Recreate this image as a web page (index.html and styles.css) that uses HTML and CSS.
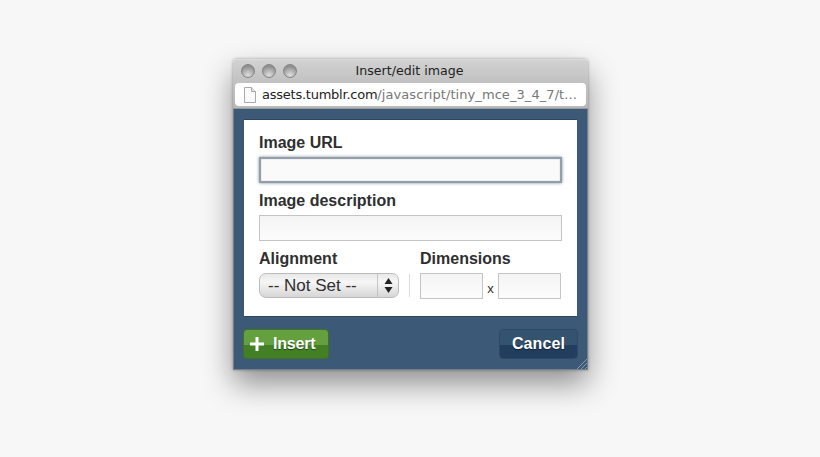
FILE: index.html
```html
<!DOCTYPE html>
<html>
<head>
  <meta charset="utf-8">
  <link rel="stylesheet" href="styles.css">
</head>
<body>
  <div class="window">
    <div class="titlebar">
      <div class="lights">
        <span class="light"></span>
        <span class="light"></span>
        <span class="light"></span>
      </div>
      <div class="title">Insert/edit image</div>
    </div>
    <div class="addressbar">
      <div class="address">
        <svg class="page-icon" width="13" height="16" viewBox="0 0 13 16">
          <path d="M1.5 .5H8.5L12.5 4.5V15.5H1.5Z" fill="#fbfbfb" stroke="#a9a9a9"/>
          <path d="M8.5 .5V4.5H12.5" fill="#e4e4e4" stroke="#a9a9a9"/>
        </svg>
        <span class="host">assets.tumblr.com</span><span class="path">/javascript/tiny_mce_3_4_7/t...</span>
      </div>
    </div>
    <div class="content">
      <div class="panel">
        <label class="field-label">Image URL</label>
        <div class="input input-focus"></div>
        <label class="field-label">Image description</label>
        <div class="input"></div>
        <div class="columns">
          <div class="col-align">
            <label class="field-label">Alignment</label>
            <div class="select">
              <span class="select-value">-- Not Set --</span>
              <span class="select-arrows">
                <svg width="9" height="17" viewBox="0 0 9 17">
                  <path d="M4.5 1L8.5 7H.5Z" fill="#222"/>
                  <path d="M4.5 16L.5 10H8.5Z" fill="#222"/>
                </svg>
              </span>
            </div>
          </div>
          <div class="divider"></div>
          <div class="col-dims">
            <label class="field-label">Dimensions</label>
            <div class="dims">
              <div class="input input-dim"></div>
              <span class="times">x</span>
              <div class="input input-dim"></div>
            </div>
          </div>
        </div>
      </div>
      <div class="actions">
        <div class="btn btn-insert">
          <svg width="16" height="16" viewBox="0 0 16 16">
            <path d="M8 1V15M1 8H15" stroke="#fff" stroke-width="3"/>
          </svg>
          <span>Insert</span>
        </div>
        <div class="btn btn-cancel">Cancel</div>
      </div>
      <svg class="grip" width="12" height="12" viewBox="0 0 12 12">
        <path d="M2 12L12 2M6 12L12 6M10 12L12 10" stroke="#8799aa" stroke-width="1"/>
      </svg>
    </div>
  </div>
</body>
</html>
```

FILE: styles.css
```css
body {
  margin: 0;
  padding: 59px 0 0 233px;
  height: 398px;
  overflow: hidden;
  background: #f7f7f7;
  font-family: "Liberation Sans", Arial, sans-serif;
  color: #2f2f2f;
}

.window {
  width: 355px;
  border-radius: 4px 4px 0 0;
  box-shadow: 0 14px 30px rgba(0, 0, 0, 0.42), 0 0 3px rgba(0, 0, 0, 0.35);
}

.titlebar {
  display: flex;
  align-items: center;
  height: 21px;
  padding: 0 8px;
  border-radius: 4px 4px 0 0;
  background: linear-gradient(#d2d2d2, #c2c2c2);
  border-top: 1px solid #dcdcdc;
}

.lights {
  display: flex;
  gap: 7px;
}

.light {
  width: 14px;
  height: 14px;
  border-radius: 50%;
  border: 1px solid #858585;
  background: radial-gradient(circle at 50% 85%, #dfdfdf, #8f8f8f 75%);
  box-sizing: border-box;
}

.title {
  flex: 1;
  padding-right: 58px;
  text-align: center;
  font-family: "DejaVu Sans", sans-serif;
  font-size: 12.6px;
  color: #222;
}

.addressbar {
  height: 28px;
  padding: 2px 2px 0;
  background: linear-gradient(#c2c2c2, #b8b8b8);
  border-bottom: 1px solid #9a9a9a;
  box-sizing: border-box;
}

.address {
  display: flex;
  align-items: center;
  height: 23px;
  padding-left: 8px;
  background: #fff;
  border-radius: 4px;
  font-family: "DejaVu Sans", sans-serif;
  font-size: 13px;
  white-space: nowrap;
  overflow: hidden;
}

.page-icon {
  margin-right: 6px;
  flex-shrink: 0;
}

.host {
  color: #222;
  letter-spacing: -0.24px;
}

.path {
  color: #777;
  letter-spacing: 0.07px;
}

.content {
  position: relative;
  height: 261px;
  padding: 11px 10px 0;
  box-sizing: border-box;
  background: #3c5a78;
  border: 1px solid #71808f;
  border-width: 0 1px 1px;
}

.panel {
  height: 197px;
  padding: 13px 15px 0;
  box-sizing: border-box;
  background: #fff;
  border-bottom: 1px solid #2e475f;
  box-shadow: 0 -1px 0 #2e475f;
}

.field-label {
  display: block;
  font-size: 16px;
  font-weight: bold;
  line-height: 19px;
  margin-bottom: 5px;
}

.input {
  height: 26px;
  box-sizing: border-box;
  border: 1px solid #c4c4c4;
  background: linear-gradient(#f4f4f4, #fcfcfc);
  margin-bottom: 8px;
}

.input-focus {
  border: 2px solid #939ea9;
  background: #fafafa;
  box-shadow: 0 0 3px #7f8d9b, inset 0 0 1px #7f8d9b;
}

.columns {
  display: flex;
}

.col-align {
  width: 140px;
}

.divider {
  width: 1px;
  height: 23px;
  margin: 25px 0 0 10px;
  background: #dcdcdc;
}

.select {
  display: flex;
  align-items: center;
  justify-content: space-between;
  height: 25px;
  box-sizing: border-box;
  border: 1px solid #bcbcbc;
  border-radius: 7px;
  background: linear-gradient(#e8e8e8, #f6f6f6 35%, #d6d6d6);
  font-size: 17px;
}

.select-value {
  padding-left: 8px;
}

.select-arrows {
  display: flex;
  align-items: center;
  justify-content: center;
  width: 20px;
  height: 100%;
  border-left: 1px solid #c4c4c4;
}

.col-dims {
  margin-left: 10px;
}

.dims {
  display: flex;
  align-items: center;
}

.input-dim {
  width: 63px;
  margin: 0;
}

.times {
  width: 15px;
  text-align: center;
  font-size: 13px;
  padding-top: 4px;
}

.actions {
  display: flex;
  justify-content: space-between;
  padding: 12px 0 0;
  margin: 0 -1px 0 -1px;
}

.btn {
  display: flex;
  align-items: center;
  justify-content: center;
  height: 30px;
  box-sizing: border-box;
  border-radius: 4px;
  color: #fff;
  font-size: 16px;
  font-weight: bold;
  text-shadow: 0 1px 1px rgba(0, 0, 0, 0.5);
}

.btn-insert {
  justify-content: flex-start;
  gap: 8px;
  width: 86px;
  padding-left: 5px;
  border: 1px solid #3f7324;
  background: linear-gradient(#64a13e 52%, #437f24 52%);
  letter-spacing: -0.2px;
}

.btn-cancel {
  width: 79px;
  border: 1px solid #2f4a66;
  background: linear-gradient(#34536f 52%, #213e5e 52%);
  letter-spacing: 0.1px;
}

.grip {
  position: absolute;
  right: 0;
  bottom: 0;
}
```
